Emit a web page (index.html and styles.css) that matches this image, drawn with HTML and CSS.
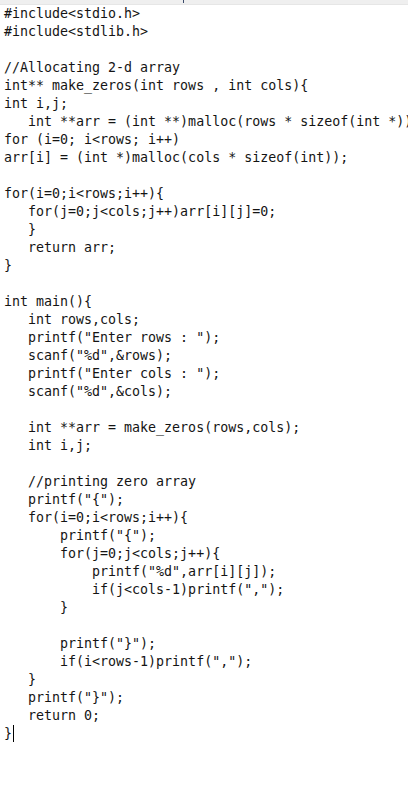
FILE: index.html
```html
<!DOCTYPE html>
<html lang="en">
<head>
<meta charset="utf-8">
<title>make_zeros.c</title>
<link rel="stylesheet" href="styles.css">
</head>
<body>
<div class="topbar"><span class="tick"></span></div>
<pre class="code">#include&lt;stdio.h&gt;
#include&lt;stdlib.h&gt;

//Allocating 2-d array
int** make_zeros(int rows , int cols){
int i,j;
   int **arr = (int **)malloc(rows * sizeof(int *));
for (i=0; i&lt;rows; i++)
arr[i] = (int *)malloc(cols * sizeof(int));

for(i=0;i&lt;rows;i++){
   for(j=0;j&lt;cols;j++)arr[i][j]=0;
   }
   return arr;
}

int main(){
   int rows,cols;
   printf("Enter rows : ");
   scanf("%d",&amp;rows);
   printf("Enter cols : ");
   scanf("%d",&amp;cols);

   int **arr = make_zeros(rows,cols);
   int i,j;

   //printing zero array
   printf("{");
   for(i=0;i&lt;rows;i++){
       printf("{");
       for(j=0;j&lt;cols;j++){
           printf("%d",arr[i][j]);
           if(j&lt;cols-1)printf(",");
       }

       printf("}");
       if(i&lt;rows-1)printf(",");
   }
   printf("}");
   return 0;
}<span class="caret"></span></pre>
</body>
</html>
```
FILE: styles.css
```css
html, body {
  margin: 0;
  padding: 0;
  background: #ffffff;
  overflow: hidden;
}

.topbar {
  height: 4px;
  background: #efefef;
  border-bottom: 1px solid #e6e6e6;
  display: flex;
}

.tick {
  margin-left: 183px;
  width: 1px;
  height: 3px;
  background: #3a4a6a;
}

.code {
  margin: 0;
  padding: 0 0 0 4px;
  font-family: "DejaVu Sans Mono", "Liberation Mono", monospace;
  font-size: 13.3px;
  line-height: 18px;
  color: #141414;
  white-space: pre;
}

.caret {
  display: inline-block;
  width: 0;
  height: 17px;
  border-left: 1px solid #000;
  margin-left: 1px;
  vertical-align: -4px;
}
```
